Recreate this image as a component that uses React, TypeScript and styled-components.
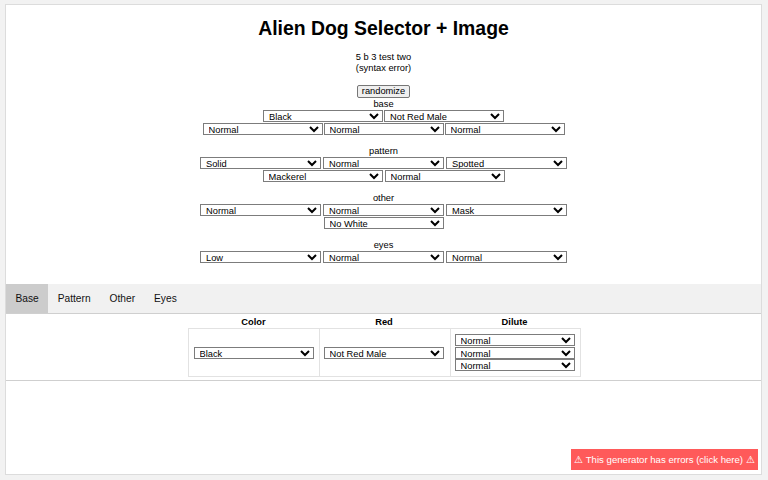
import React from "react";
import styled, { createGlobalStyle } from "styled-components";

const Global = createGlobalStyle`
  html, body { margin: 0; padding: 0; background: #f2f2f2; }
  body { font-family: "Liberation Sans", Arial, sans-serif; color: #000; }
  * { box-sizing: border-box; }
`;

const Page = styled.div`
  width: 768px;
  height: 480px;
  padding: 4px 6px 5px 5px;
`;

const Card = styled.div`
  height: 100%;
  background: #fff;
  border: 1px solid #dcdcdc;
  display: flex;
  flex-direction: column;
`;

const Top = styled.div`
  display: flex;
  flex-direction: column;
  align-items: center;
  height: 279px;
`;

const Title = styled.h1`
  margin: 11px 0 0;
  font-size: 19.4px;
  line-height: 24px;
  font-weight: bold;
`;

const Note = styled.div`
  margin-top: 11.5px;
  font-size: 9.3px;
  line-height: 11px;
  text-align: center;
`;

const Button = styled.button`
  margin-top: 11.5px;
  height: 13px;
  padding: 0 4px;
  font-family: "Liberation Sans", Arial, sans-serif;
  font-size: 9.3px;
  line-height: 11px;
  background: #efefef;
  border: 1px solid #767676;
  border-radius: 2px;
  color: #000;
`;

const Group = styled.div<{ $first?: boolean }>`
  display: flex;
  flex-direction: column;
  align-items: center;
  margin-top: ${(p) => (p.$first ? 0 : 10)}px;
`;

const Label = styled.div`
  font-size: 9.3px;
  line-height: 12px;
  height: 12px;
`;

const Row = styled.div<{ $gap?: number }>`
  display: flex;
  gap: ${(p) => p.$gap ?? 1}px;
  & + & { margin-top: 1px; }
`;

const Select = styled.select<{ $w?: number }>`
  width: ${(p) => p.$w ?? 120}px;
  height: 12px;
  padding: 0 1px;
  margin: 0;
  font-family: "Liberation Sans", Arial, sans-serif;
  font-size: 9.3px;
  line-height: 10px;
  border: 1px solid #7c7c7c;
  border-radius: 0;
  background: #fff;
  color: #000;
`;

const TabBar = styled.div`
  display: flex;
  height: 30px;
  background: #f1f1f1;
  border-bottom: 1px solid #cfcfcf;
`;

const Tab = styled.div<{ $active?: boolean }>`
  padding: 0 9.5px;
  display: flex;
  align-items: center;
  font-size: 10.2px;
  background: ${(p) => (p.$active ? "#cccccc" : "transparent")};
  color: #111;
`;

const Panel = styled.div`
  height: 67px;
  border-bottom: 1px solid #cfcfcf;
  display: flex;
  flex-direction: column;
  align-items: center;
  padding-left: 1px;
`;

const Grid = styled.div`
  display: grid;
  grid-template-columns: 130px 131px 130px;
`;

const Head = styled.div`
  height: 14px;
  line-height: 16px;
  text-align: center;
  font-weight: bold;
  font-size: 9.3px;
`;

const Body = styled(Grid)`
  border: 1px solid #e2e2e2;
  height: 49px;
`;

const Cell = styled.div`
  display: flex;
  flex-direction: column;
  justify-content: center;
  align-items: flex-start;
  padding: 0 4px 0 5px;
  & + & { border-left: 1px solid #e2e2e2; padding-left: 4px; }
`;

const Stack = styled.div`
  display: flex;
  flex-direction: column;
  gap: 0.5px;
`;

const ErrorBadge = styled.div`
  position: fixed;
  right: 10px;
  bottom: 10px;
  height: 21px;
  width: 187px;
  background: #ff5a5a;
  color: #fff;
  font-size: 9.6px;
  display: flex;
  align-items: center;
  justify-content: center;
  white-space: nowrap;
  cursor: pointer;
`;

const Opt = ({ v, w }: { v: string; w?: number }) => (
  <Select $w={w} defaultValue={v}>
    <option>{v}</option>
  </Select>
);

export default function App() {
  return (
    <>
      <Global />
      <Page>
        <Card>
          <Top>
            <Title>Alien Dog Selector + Image</Title>
            <Note>
              5 b 3 test two
              <br />
              (syntax error)
            </Note>
            <Button>randomize</Button>
            <Group $first>
              <Label>base</Label>
              <Row>
                <Opt v="Black" />
                <Opt v="Not Red Male" />
              </Row>
              <Row>
                <Opt v="Normal" />
                <Opt v="Normal" />
                <Opt v="Normal" />
              </Row>
            </Group>
            <Group>
              <Label>pattern</Label>
              <Row $gap={2}>
                <Opt v="Solid" w={121} />
                <Opt v="Normal" w={121} />
                <Opt v="Spotted" w={121} />
              </Row>
              <Row $gap={2}>
                <Opt v="Mackerel" />
                <Opt v="Normal" />
              </Row>
            </Group>
            <Group>
              <Label>other</Label>
              <Row $gap={2}>
                <Opt v="Normal" w={121} />
                <Opt v="Normal" w={121} />
                <Opt v="Mask" w={121} />
              </Row>
              <Row>
                <Opt v="No White" />
              </Row>
            </Group>
            <Group>
              <Label>eyes</Label>
              <Row $gap={2}>
                <Opt v="Low" w={121} />
                <Opt v="Normal" w={121} />
                <Opt v="Normal" w={121} />
              </Row>
            </Group>
          </Top>
          <TabBar>
            <Tab $active>Base</Tab>
            <Tab>Pattern</Tab>
            <Tab>Other</Tab>
            <Tab>Eyes</Tab>
          </TabBar>
          <Panel>
            <Grid>
              <Head>Color</Head>
              <Head>Red</Head>
              <Head>Dilute</Head>
            </Grid>
            <Body>
              <Cell>
                <Opt v="Black" />
              </Cell>
              <Cell>
                <Opt v="Not Red Male" />
              </Cell>
              <Cell>
                <Stack>
                  <Opt v="Normal" />
                  <Opt v="Normal" />
                  <Opt v="Normal" />
                </Stack>
              </Cell>
            </Body>
          </Panel>
        </Card>
      </Page>
      <ErrorBadge>⚠ This generator has errors (click here) ⚠</ErrorBadge>
    </>
  );
}
